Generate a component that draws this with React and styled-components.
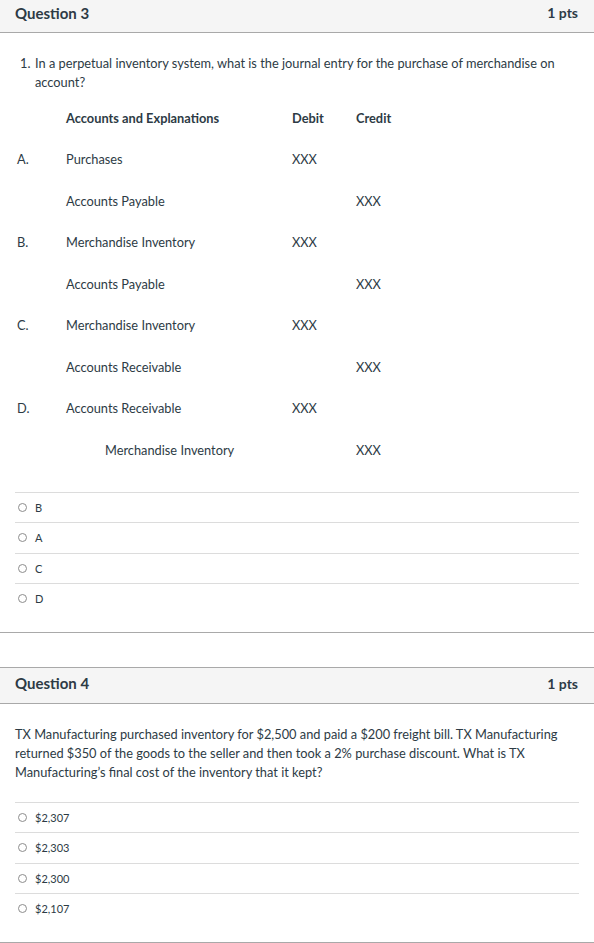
import React from "react";
import styled, { createGlobalStyle } from "styled-components";

const GlobalStyle = createGlobalStyle`
  html, body { margin: 0; padding: 0; background: #ffffff; }
  body {
    font-family: Lato, "Noto Sans", "Liberation Sans", sans-serif;
    color: #2d3b45;
    -webkit-font-smoothing: antialiased;
  }
`;

const Page = styled.div`
  width: 594px;
  overflow: hidden;
`;

const Card = styled.section`
  margin-top: ${(p) => (p.$first ? "-4px" : "34px")};
  border-bottom: 1px solid #a9a9a9;
`;

const Header = styled.header`
  box-sizing: border-box;
  display: flex;
  justify-content: space-between;
  align-items: center;
  height: 37px;
  padding: 0 16px 4px 15px;
  background: #f5f5f5;
  border-top: 1px solid #a9a9a9;
  border-bottom: 1px solid #a9a9a9;
`;

const Title = styled.h2`
  margin: 0;
  font-size: 15px;
  font-weight: 700;
  color: #2d3b45;
`;

const Points = styled.span`
  font-size: 14px;
  font-weight: 700;
`;

const Body = styled.div`
  padding: 21px 15px 18px;
`;

const Prompt = styled.div`
  font-size: 12.8px;
  line-height: 19px;
`;

const NumberedPrompt = styled.div`
  display: flex;
  padding-left: 5px;
  font-size: 12.8px;
  line-height: 19px;
`;

const Num = styled.span`
  flex: 0 0 15px;
`;

const Journal = styled.div`
  display: grid;
  grid-template-columns: 49px 226px 64px 1fr;
  grid-auto-rows: 41.5px;
  align-items: center;
  margin: 5px 0 21px 2px;
  font-size: 12.8px;
`;

const HeadCell = styled.div`
  font-weight: 700;
`;

const Cell = styled.div`
  padding-left: ${(p) => (p.$indent ? "39px" : "0")};
`;

const AnswerList = styled.div`
  margin-top: ${(p) => p.$top || "0"};
`;

const Answer = styled.label`
  display: flex;
  align-items: center;
  height: 29.5px;
  border-top: 1px solid #dcdcdc;
  font-size: 11px;
  color: #2d3b45;
`;

const Radio = styled.span`
  box-sizing: border-box;
  width: 9px;
  height: 9px;
  margin: 0 8px 0 3px;
  border: 1px solid #8d8d8d;
  border-radius: 50%;
`;

const entries = [
  ["A.", "Purchases", false, "XXX", ""],
  ["", "Accounts Payable", false, "", "XXX"],
  ["B.", "Merchandise Inventory", false, "XXX", ""],
  ["", "Accounts Payable", false, "", "XXX"],
  ["C.", "Merchandise Inventory", false, "XXX", ""],
  ["", "Accounts Receivable", false, "", "XXX"],
  ["D.", "Accounts Receivable", false, "XXX", ""],
  ["", "Merchandise Inventory", true, "", "XXX"],
];

function Answers({ items, top }) {
  return (
    <AnswerList $top={top}>
      {items.map((a) => (
        <Answer key={a}>
          <Radio />
          {a}
        </Answer>
      ))}
    </AnswerList>
  );
}

export default function App() {
  return (
    <Page>
      <GlobalStyle />
      <Card $first>
        <Header>
          <Title>Question 3</Title>
          <Points>1 pts</Points>
        </Header>
        <Body>
          <NumberedPrompt>
            <Num>1.</Num>
            <span>
              In a perpetual inventory system, what is the journal entry for the
              purchase of merchandise on account?
            </span>
          </NumberedPrompt>
          <Journal>
            <div />
            <HeadCell>Accounts and Explanations</HeadCell>
            <HeadCell>Debit</HeadCell>
            <HeadCell>Credit</HeadCell>
            {entries.map(([l, acc, ind, d, c], i) => (
              <React.Fragment key={i}>
                <Cell>{l}</Cell>
                <Cell $indent={ind}>{acc}</Cell>
                <Cell>{d}</Cell>
                <Cell>{c}</Cell>
              </React.Fragment>
            ))}
          </Journal>
          <Answers items={["B", "A", "C", "D"]} />
        </Body>
      </Card>
      <Card>
        <Header>
          <Title>Question 4</Title>
          <Points>1 pts</Points>
        </Header>
        <Body>
          <Prompt>
            TX Manufacturing purchased inventory for $2,500 and paid a $200
            freight bill. TX Manufacturing returned $350 of the goods to the
            seller and then took a 2% purchase discount. What is TX
            Manufacturing’s final cost of the inventory that it kept?
          </Prompt>
          <Answers items={["$2,307", "$2,303", "$2,300", "$2,107"]} top="20px" />
        </Body>
      </Card>
    </Page>
  );
}
